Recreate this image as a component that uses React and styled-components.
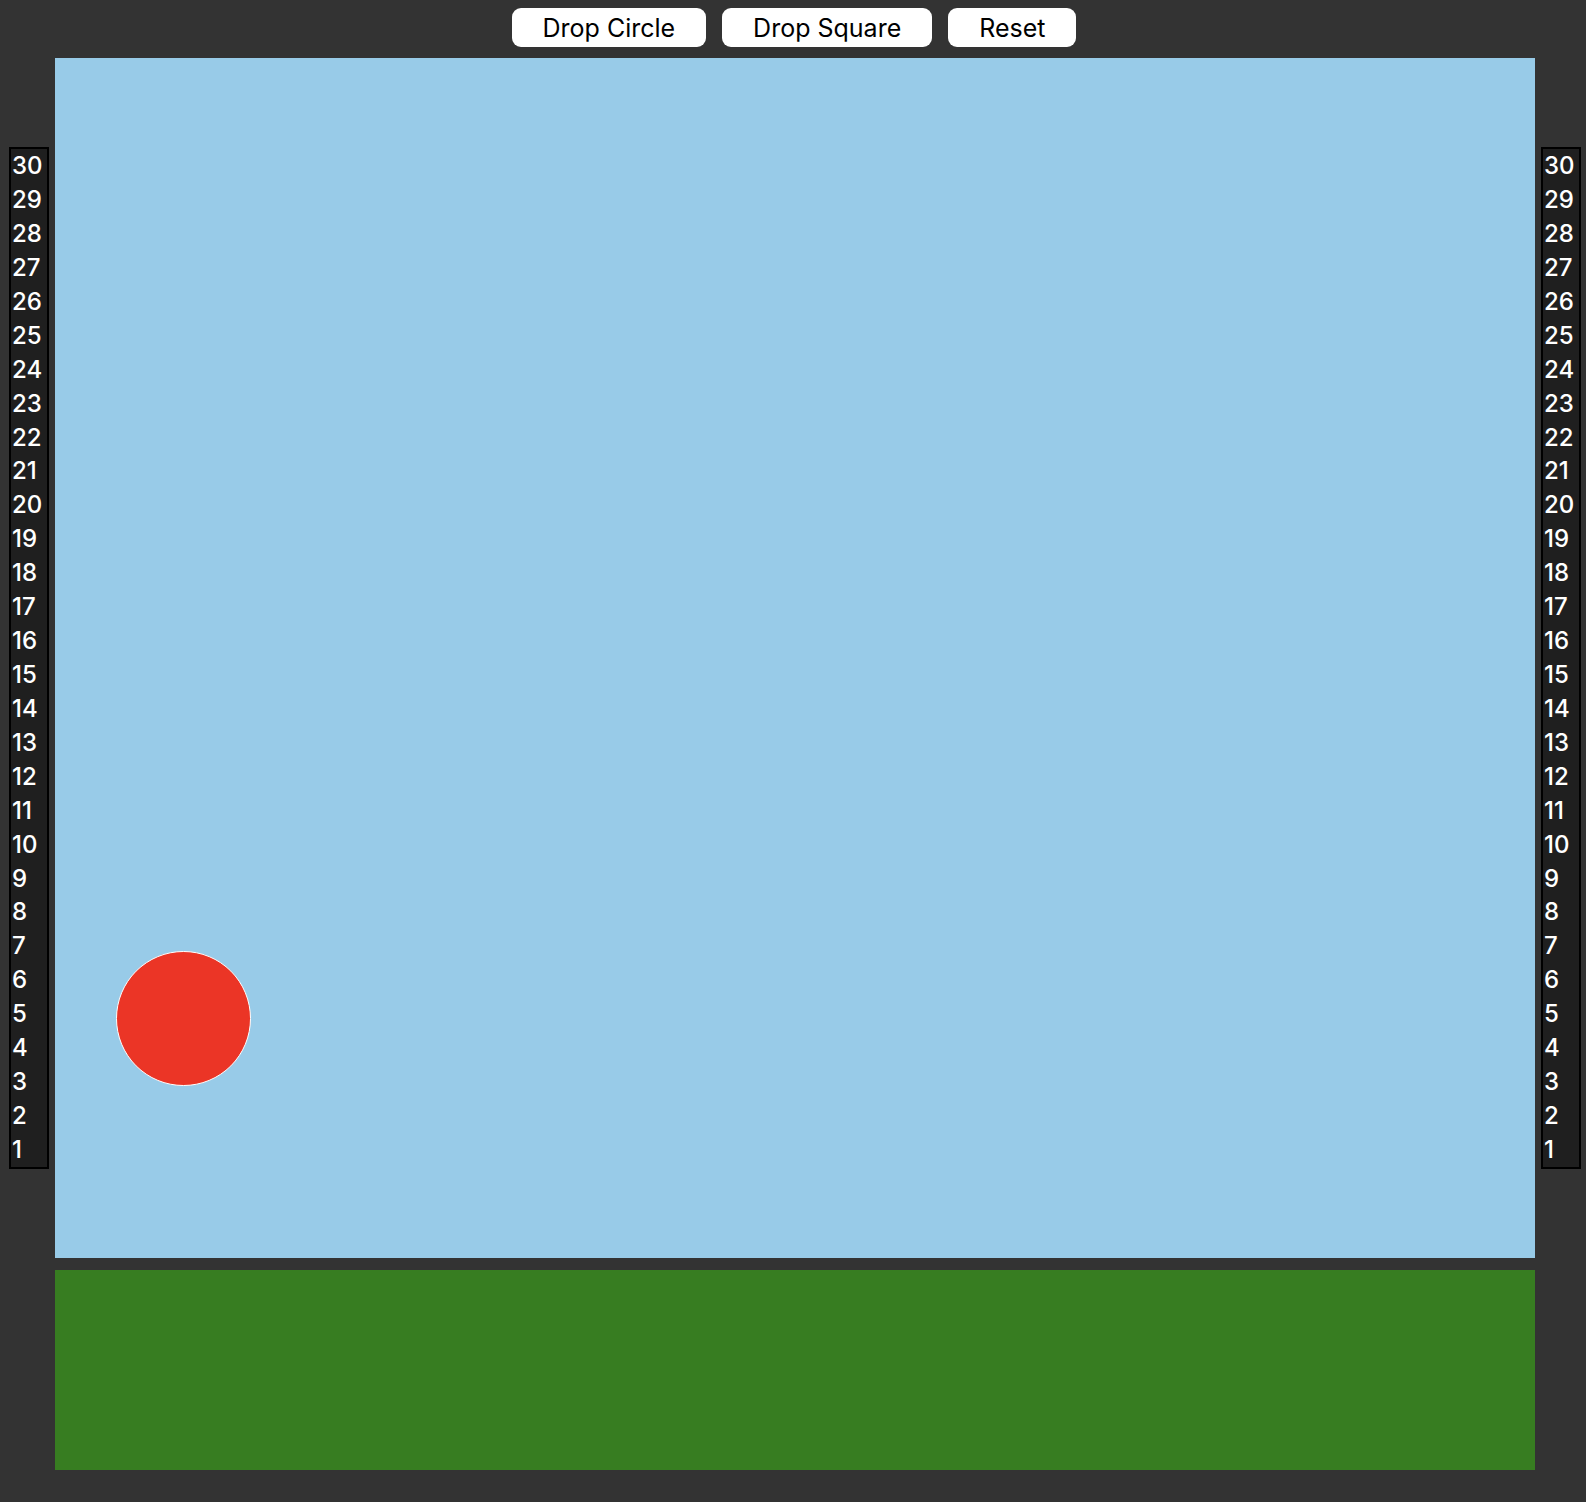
import React from 'react';
import styled, { createGlobalStyle } from 'styled-components';

const GlobalStyle = createGlobalStyle`
  html, body {
    margin: 0;
    padding: 0;
    background: #333333;
    font-family: Inter, "Liberation Sans", Arial, sans-serif;
  }
`;

const Page = styled.div`
  width: 1586px;
  min-height: 1502px;
  background: #333333;
  display: flex;
  flex-direction: column;
`;

const Toolbar = styled.div`
  display: flex;
  justify-content: center;
  gap: 16px;
  padding-top: 8px;
  padding-left: 2px;
  height: 39px;
`;

const Button = styled.button`
  height: 39px;
  padding: 0 31px;
  border: none;
  border-radius: 9px;
  background: #ffffff;
  color: #000000;
  font-family: inherit;
  font-size: 25px;
  cursor: pointer;
`;

const Stage = styled.div`
  display: flex;
  align-items: center;
  gap: 6px;
  padding-left: 9px;
  margin-top: 11px;
`;

const Ruler = styled.div`
  width: 35px;
  border: 2px solid #000000;
  background: #1f1f1f;
  color: #ffffff;
  font-size: 24px;
  font-weight: 500;
  line-height: 33.93px;
  padding-left: 1px;
  display: flex;
  flex-direction: column;
`;

const Tick = styled.span`
  display: block;
  height: 33.93px;
  white-space: nowrap;
`;

const Sky = styled.div`
  position: relative;
  width: 1480px;
  height: 1200px;
  background: #98cbe8;
  flex-shrink: 0;
`;

const Ball = styled.div`
  position: absolute;
  box-sizing: border-box;
  border-radius: 50%;
  background: #eb3526;
  border: 1.5px solid #ffffff;
`;

const Ground = styled.div`
  width: 1480px;
  height: 200px;
  margin: 12px 0 0 55px;
  background: #377d21;
`;

const ticks = Array.from({ length: 30 }, (_, i) => 30 - i);

function HeightRuler() {
  return (
    <Ruler>
      {ticks.map((n) => (
        <Tick key={n}>{n}</Tick>
      ))}
    </Ruler>
  );
}

const bodies = [{ id: 1, x: 61, y: 893, size: 135 }];

export default function App() {
  return (
    <Page>
      <GlobalStyle />
      <Toolbar>
        <Button>Drop Circle</Button>
        <Button>Drop Square</Button>
        <Button>Reset</Button>
      </Toolbar>
      <Stage>
        <HeightRuler />
        <Sky>
          {bodies.map((b) => (
            <Ball
              key={b.id}
              style={{ left: b.x, top: b.y, width: b.size, height: b.size }}
            />
          ))}
        </Sky>
        <HeightRuler />
      </Stage>
      <Ground />
    </Page>
  );
}
